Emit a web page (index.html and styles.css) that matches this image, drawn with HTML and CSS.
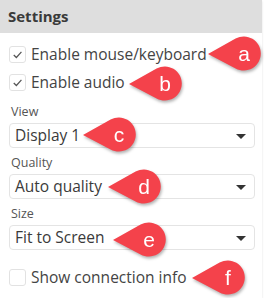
FILE: index.html
```html
<!DOCTYPE html>
<html lang="en">
<head>
  <meta charset="UTF-8" />
  <title>Settings</title>
  <link rel="stylesheet" href="styles.css">
</head>
<body>
  <div class="panel">
    <div class="panel-header">Settings</div>
    <div class="panel-body">
      <label class="check-row">
        <span class="checkbox checked">
          <svg viewBox="0 0 16 16"><path d="M4 8.5 L6.8 11.2 L12.2 5.2" /></svg>
        </span>
        Enable mouse/keyboard
      </label>
      <label class="check-row">
        <span class="checkbox checked">
          <svg viewBox="0 0 16 16"><path d="M4 8.5 L6.8 11.2 L12.2 5.2" /></svg>
        </span>
        Enable audio
      </label>

      <div class="field first">
        <div class="field-label">View</div>
        <div class="select">Display 1<span class="caret"></span></div>
      </div>
      <div class="field">
        <div class="field-label">Quality</div>
        <div class="select">Auto quality<span class="caret"></span></div>
      </div>
      <div class="field">
        <div class="field-label">Size</div>
        <div class="select">Fit to Screen<span class="caret"></span></div>
      </div>

      <label class="check-row last">
        <span class="checkbox"></span>
        Show connection info
      </label>
    </div>

    <!-- callout pins -->
    <svg class="pin pin-a" viewBox="0 0 58 40"><path d="M2 20 L29.6 4.6 A17 17 0 1 1 29.6 34.4 Z" /><text x="38" y="27">a</text></svg>
    <svg class="pin pin-b" viewBox="0 0 58 40"><path d="M2 20 L29.6 4.6 A17 17 0 1 1 29.6 34.4 Z" /><text x="38" y="27">b</text></svg>
    <svg class="pin pin-c" viewBox="0 0 58 40"><path d="M2 20 L29.6 4.6 A17 17 0 1 1 29.6 34.4 Z" /><text x="38" y="27">c</text></svg>
    <svg class="pin pin-d" viewBox="0 0 58 40"><path d="M2 20 L29.6 4.6 A17 17 0 1 1 29.6 34.4 Z" /><text x="38" y="27">d</text></svg>
    <svg class="pin pin-e" viewBox="0 0 58 40"><path d="M2 20 L29.6 4.6 A17 17 0 1 1 29.6 34.4 Z" /><text x="38" y="27">e</text></svg>
    <svg class="pin pin-f" viewBox="0 0 58 40"><path d="M2 20 L29.6 4.6 A17 17 0 1 1 29.6 34.4 Z" /><text x="38" y="27">f</text></svg>
  </div>
</body>
</html>
```

FILE: styles.css
```css
* {
  margin: 0;
  padding: 0;
  box-sizing: border-box;
}

body {
  background: #ffffff;
  font-family: 'Open Sans', 'Noto Sans', sans-serif;
  color: #444;
}

.panel {
  position: relative;
  width: 262px;
  height: 298px;
  background: #ffffff;
  box-shadow: 0 1px 2px rgba(0, 0, 0, 0.12);
}

.panel-header {
  height: 33px;
  line-height: 33px;
  padding-left: 8px;
  background: #dedede;
  font-size: 15px;
  font-weight: bold;
  color: #3a3a3a;
}

.panel-body {
  padding: 7px 7px 0 9px;
}

.check-row {
  display: flex;
  align-items: center;
  gap: 5px;
  height: 28px;
  font-size: 15.5px;
  color: #444;
}

.check-row.last {
  margin-top: 13px;
}

.checkbox {
  width: 17px;
  height: 17px;
  border: 1px solid #e2e2e2;
  border-radius: 3px;
  display: flex;
  align-items: center;
  justify-content: center;
  flex-shrink: 0;
}

.checkbox svg {
  width: 15px;
  height: 15px;
}

.checkbox path {
  fill: none;
  stroke: #555;
  stroke-width: 1.3;
}

.field {
  margin-top: 8px;
}

.field.first {
  margin-top: 9px;
}

.field-label {
  font-size: 12.5px;
  line-height: 14px;
  margin-bottom: 4px;
  padding-left: 2px;
  color: #555;
}

.select {
  position: relative;
  height: 25px;
  line-height: 23px;
  padding-left: 5px;
  border: 1px solid #e4e4e4;
  border-radius: 4px;
  font-size: 15.5px;
  color: #3a3a3a;
}

.caret {
  position: absolute;
  right: 8px;
  top: 10px;
  width: 0;
  height: 0;
  border-left: 5px solid transparent;
  border-right: 5px solid transparent;
  border-top: 5px solid #333;
}

.pin {
  position: absolute;
  width: 58px;
  height: 40px;
  overflow: visible;
  filter: drop-shadow(1px 2px 1.5px rgba(0, 0, 0, 0.3));
}

.pin path {
  fill: #f4424b;
}

.pin text {
  fill: #ffffff;
  font-family: 'Liberation Sans', Arial, sans-serif;
  font-size: 21px;
  text-anchor: middle;
}

.pin-a { left: 206px; top: 34px; }
.pin-b { left: 127px; top: 64px; }
.pin-c { left: 81px; top: 115px; }
.pin-d { left: 106px; top: 167px; }
.pin-e { left: 111px; top: 220px; }
.pin-f { left: 190px; top: 258px; }
```
